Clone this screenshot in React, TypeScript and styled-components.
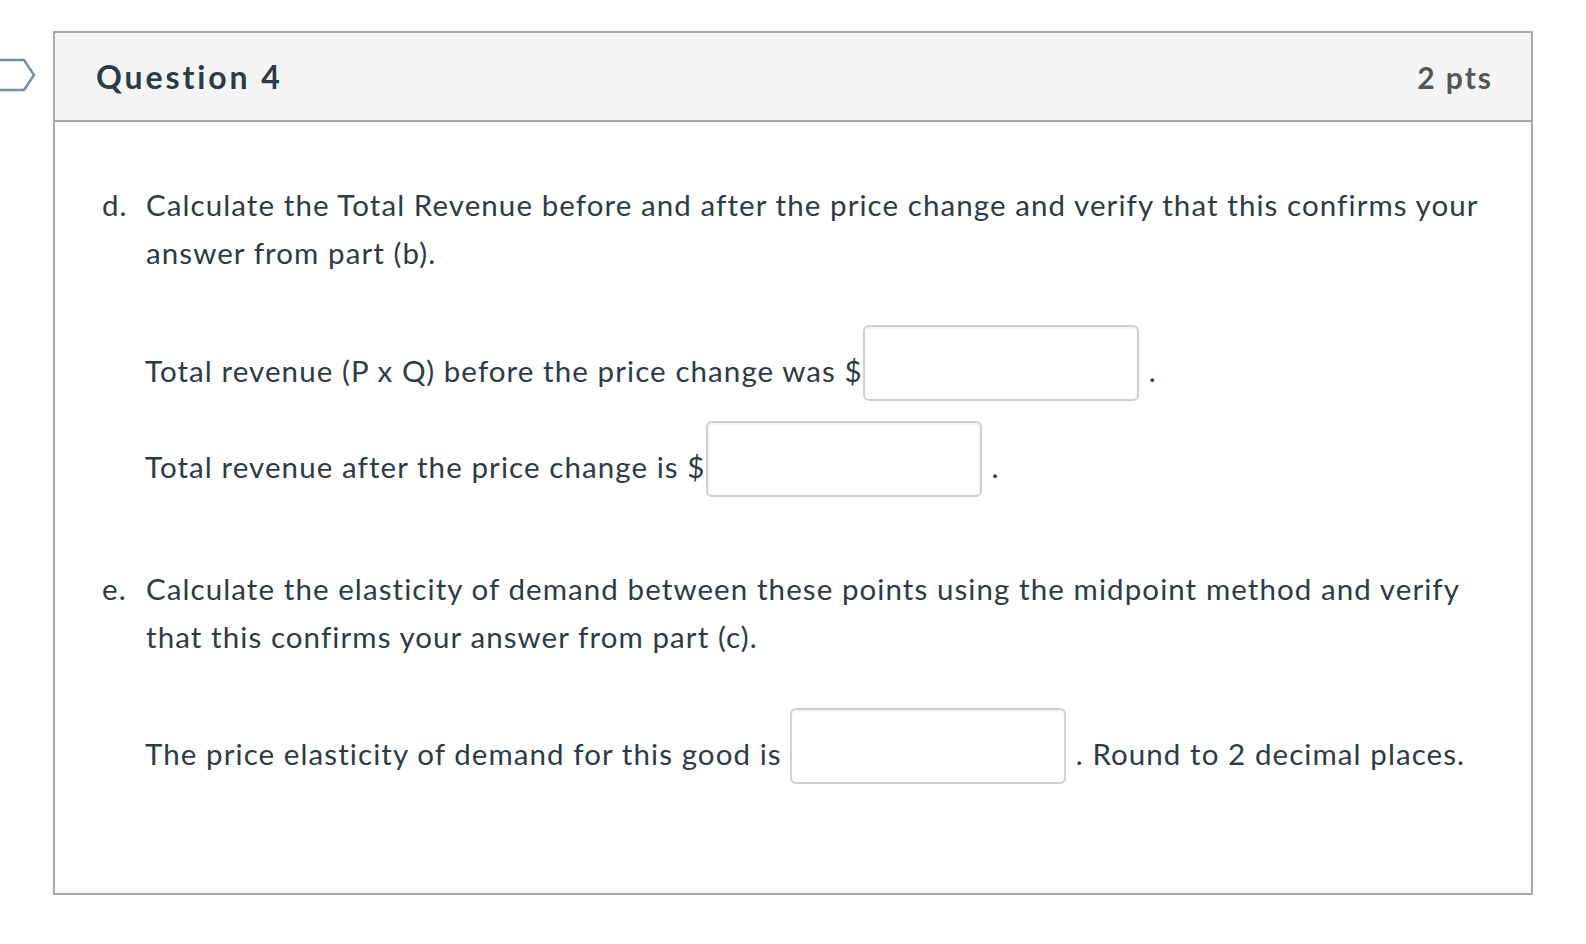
import styled, { createGlobalStyle } from "styled-components";

const GlobalStyle = createGlobalStyle`
  body {
    margin: 0;
    background: #ffffff;
    font-family: Lato, "Liberation Sans", sans-serif;
    color: #2d3b45;
  }
`;

export default function App() {
  return (
    <>
      <GlobalStyle />
      <Page>
        <Flag width="36" height="34" viewBox="0 0 36 34">
          <path
            d="M0 2 H24 L34 17 L24 32 H0"
            fill="none"
            stroke="#7590a5"
            strokeWidth="2.5"
            strokeLinejoin="round"
          />
        </Flag>
        <Card>
          <Header>
            <Title>Question 4</Title>
            <Points>2 pts</Points>
          </Header>
          <Body>
            <Part>
              <Marker>d.</Marker>
              <PartContent>
                <Prompt>
                  Calculate the Total Revenue before and after the price change
                  and verify that this confirms your answer from part (b).
                </Prompt>
                <AnswerRow $top={48}>
                  <Label>Total revenue (P x Q) before the price change was $</Label>
                  <Blank type="text" aria-label="Total revenue before" />
                  <Label>.</Label>
                </AnswerRow>
                <AnswerRow $top={20}>
                  <Label>Total revenue after the price change is $</Label>
                  <Blank type="text" aria-label="Total revenue after" />
                  <Label>.</Label>
                </AnswerRow>
              </PartContent>
            </Part>
            <Part $top={68}>
              <Marker>e.</Marker>
              <PartContent>
                <Prompt>
                  Calculate the elasticity of demand between these points using
                  the midpoint method and verify that this confirms your answer
                  from part (c).
                </Prompt>
                <AnswerRow $top={47}>
                  <Label $gap>The price elasticity of demand for this good is</Label>
                  <Blank type="text" aria-label="Price elasticity" />
                  <Label>. Round to 2 decimal places.</Label>
                </AnswerRow>
              </PartContent>
            </Part>
          </Body>
        </Card>
      </Page>
    </>
  );
}

const Page = styled.div`
  position: relative;
  padding: 31px 0 50px 53px;
`;

const Flag = styled.svg`
  position: absolute;
  left: 0;
  top: 58px;
  display: block;
`;

const Card = styled.div`
  width: 1480px;
  box-sizing: border-box;
  border: 2px solid #a8a8a8;
  background: #ffffff;
`;

const Header = styled.div`
  height: 89px;
  box-sizing: border-box;
  display: flex;
  align-items: center;
  justify-content: space-between;
  padding: 0 38px 0 41px;
  background: #f5f5f5;
  border-bottom: 2px solid #a8a8a8;
`;

const Title = styled.h2`
  margin: 0;
  font-size: 32px;
  font-weight: 700;
  letter-spacing: 2.9px;
  color: #2d3b45;
`;

const Points = styled.div`
  font-size: 30px;
  font-weight: 700;
  letter-spacing: 2px;
  color: #555555;
`;

const Body = styled.div`
  padding: 59px 28px 109px 47px;
`;

const Part = styled.div<{ $top?: number }>`
  display: grid;
  grid-template-columns: 44px 1fr;
  margin-top: ${(p) => p.$top ?? 0}px;
  font-size: 29.5px;
  line-height: 48px;
  letter-spacing: 1.08px;
`;

const Marker = styled.div`
  color: #2d3b45;
`;

const PartContent = styled.div`
  display: flex;
  flex-direction: column;
`;

const Prompt = styled.p`
  margin: 0;
  color: #2d3b45;
`;

const AnswerRow = styled.div<{ $top: number }>`
  display: flex;
  align-items: flex-end;
  margin-top: ${(p) => p.$top}px;
  margin-left: -1px;
`;

const Label = styled.span<{ $gap?: boolean }>`
  margin-bottom: 6px;
  white-space: pre;
  margin-right: ${(p) => (p.$gap ? "8px" : "0")};
`;

const Blank = styled.input`
  width: 276px;
  height: 76px;
  box-sizing: border-box;
  margin: 0 10px 0 0;
  padding: 4px 12px;
  border: 2px solid #cfcfcf;
  border-radius: 6px;
  background: #ffffff;
  box-shadow: inset 0 2px 2px rgba(0, 0, 0, 0.05);
  font-family: inherit;
  font-size: 28px;
  color: #2d3b45;
  outline: none;
`;
